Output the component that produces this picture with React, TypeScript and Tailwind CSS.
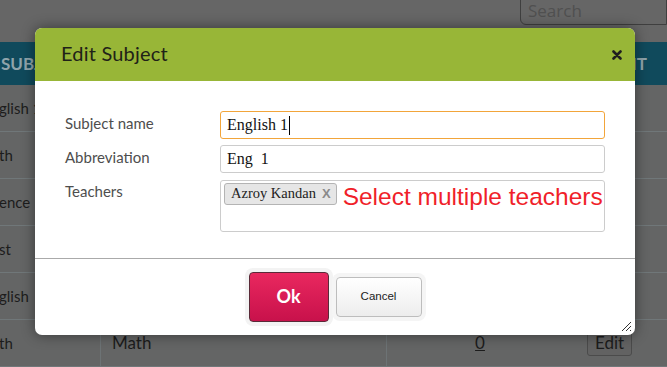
import React from "react";

const rows = ["glish 1", "th", "ence", "st", "glish", "th"];

export default function App() {
  return (
    <div className="relative w-[667px] h-[367px] overflow-hidden bg-[#666666] font-['Lato',sans-serif]">
      {/* top bar */}
      <div className="h-[42px] flex justify-end items-start">
        <div className="w-[147px] h-[27px] -mt-[2px] border border-[#3f3f3f] rounded-bl-[6px] pl-[7px] pt-[2px] text-[17px] leading-[20px] text-[#505050] font-['Open_Sans',sans-serif]">
          Search
        </div>
      </div>
      {/* table header */}
      <div className="h-[43px] bg-[#104a5c] flex items-center text-[#8fa4ab] font-bold text-[17px]">
        <div className="w-[102px] pl-[1px]">SUBJECT</div>
        <div className="flex-1" />
        <div className="pr-[20px]">EDIT</div>
      </div>
      {/* rows */}
      {rows.map((r, i) => (
        <div key={i} className="h-[47px] border-b border-[#707779] flex items-center text-[15px] text-[#1c1c1c] bg-[#646565]">
          <div className="w-[102px] h-full flex items-center border-r border-[#6d7375] -ml-[1px]">{r}</div>
          {i === 5 ? (
            <>
              <div className="w-[286px] h-full flex items-center border-r border-[#6d7375] pl-[11px] text-[17px]">Math</div>
              <div className="w-[186px] h-full flex items-center justify-center underline text-[17px]">0</div>
              <div className="flex-1 flex items-center">
                <div className="ml-[14px] w-[45px] h-[26px] border border-[#4b4b4b] rounded-[3px] bg-[#626262] text-[17px] flex items-center justify-center">Edit</div>
              </div>
            </>
          ) : (
            <div className="flex-1" />
          )}
        </div>
      ))}

      {/* modal */}
      <div className="absolute left-[35px] top-[28px] w-[600px] h-[307px] bg-white rounded-[7px] overflow-hidden shadow-[0_0_14px_rgba(0,0,0,0.45)] flex flex-col">
        <div className="h-[53px] bg-[#98b637] flex items-center justify-between pl-[26px] pr-[13px]">
          <span className="text-[20px] text-[#1f2218] tracking-[0.2px] mb-[3px]">Edit Subject</span>
          <svg width="10" height="10" viewBox="0 0 10 10" className="mt-[1px]">
            <path d="M1.5 1.5 L8.5 8.5 M8.5 1.5 L1.5 8.5" stroke="#1f1f1f" strokeWidth="2.6" strokeLinecap="round" />
          </svg>
        </div>
        <div className="h-[177px] pt-[30px] px-[30px] grid grid-cols-[155px_1fr] gap-y-[6px] content-start text-[15px] text-[#4e4e4e]">
          <div className="pt-[2px] leading-[20px]">Subject name</div>
          <div className="h-[28px] border border-[#f2a53a] rounded-[3px] flex items-center pl-[6px] font-['Liberation_Serif',serif] text-[16px] text-[#111]">
            English 1<span className="inline-block w-[1px] h-[19px] bg-black ml-[1px]" />
          </div>
          <div className="pt-[2px] leading-[20px]">Abbreviation</div>
          <div className="h-[28px] border border-[#cccccc] rounded-[3px] flex items-center pl-[6px] font-['Liberation_Serif',serif] text-[16px] text-[#111] whitespace-pre">
            Eng  1
          </div>
          <div className="pt-[1px] leading-[20px] mt-[1px]">Teachers</div>
          <div className="h-[52px] mt-[1px] border border-[#cccccc] rounded-[3px] flex items-start pl-[3px] pt-[2px]">
            <div className="h-[22px] border border-[#b4b4b4] bg-[#e6e6e6] rounded-[3px] flex items-center pl-[6px] pr-[5px] font-['Liberation_Serif',serif] text-[14.5px] text-[#222]">
              Azroy Kandan
              <span className="ml-[6px] font-['Liberation_Sans',sans-serif] font-bold text-[13px] text-[#8a8a8a]">X</span>
            </div>
            <span className="ml-[6px] font-['Liberation_Sans',sans-serif] text-[24.5px] leading-[28px] text-[#f01f2a] whitespace-nowrap">
              Select multiple teachers
            </span>
          </div>
        </div>
        <div className="h-[1px] bg-[#aaaaaa]" />
        <div className="relative flex-1 flex items-center justify-center gap-[7px] pb-[1px]">
          <div className="w-[80px] h-[50px] rounded-[4px] border border-[#5a2a38] bg-[linear-gradient(#e9285f,#c8114b)] shadow-[0_0_0_4px_#f3f3f3] flex items-center justify-center text-white font-bold text-[18px]">
            Ok
          </div>
          <div className="w-[86px] h-[40px] rounded-[4px] border border-[#bdbdbd] bg-[linear-gradient(#ffffff,#ededed)] shadow-[0_0_0_4px_#f5f5f5] flex items-center justify-center text-[#222] text-[11.5px] font-['Liberation_Sans',sans-serif]">
            Cancel
          </div>
          <svg width="12" height="12" viewBox="0 0 12 12" className="absolute right-[3px] bottom-[3px]">
            <path d="M11 2 L2 11 M11 6 L6 11 M11 10 L10 11" stroke="#333" strokeWidth="1" />
          </svg>
        </div>
      </div>
    </div>
  );
}
